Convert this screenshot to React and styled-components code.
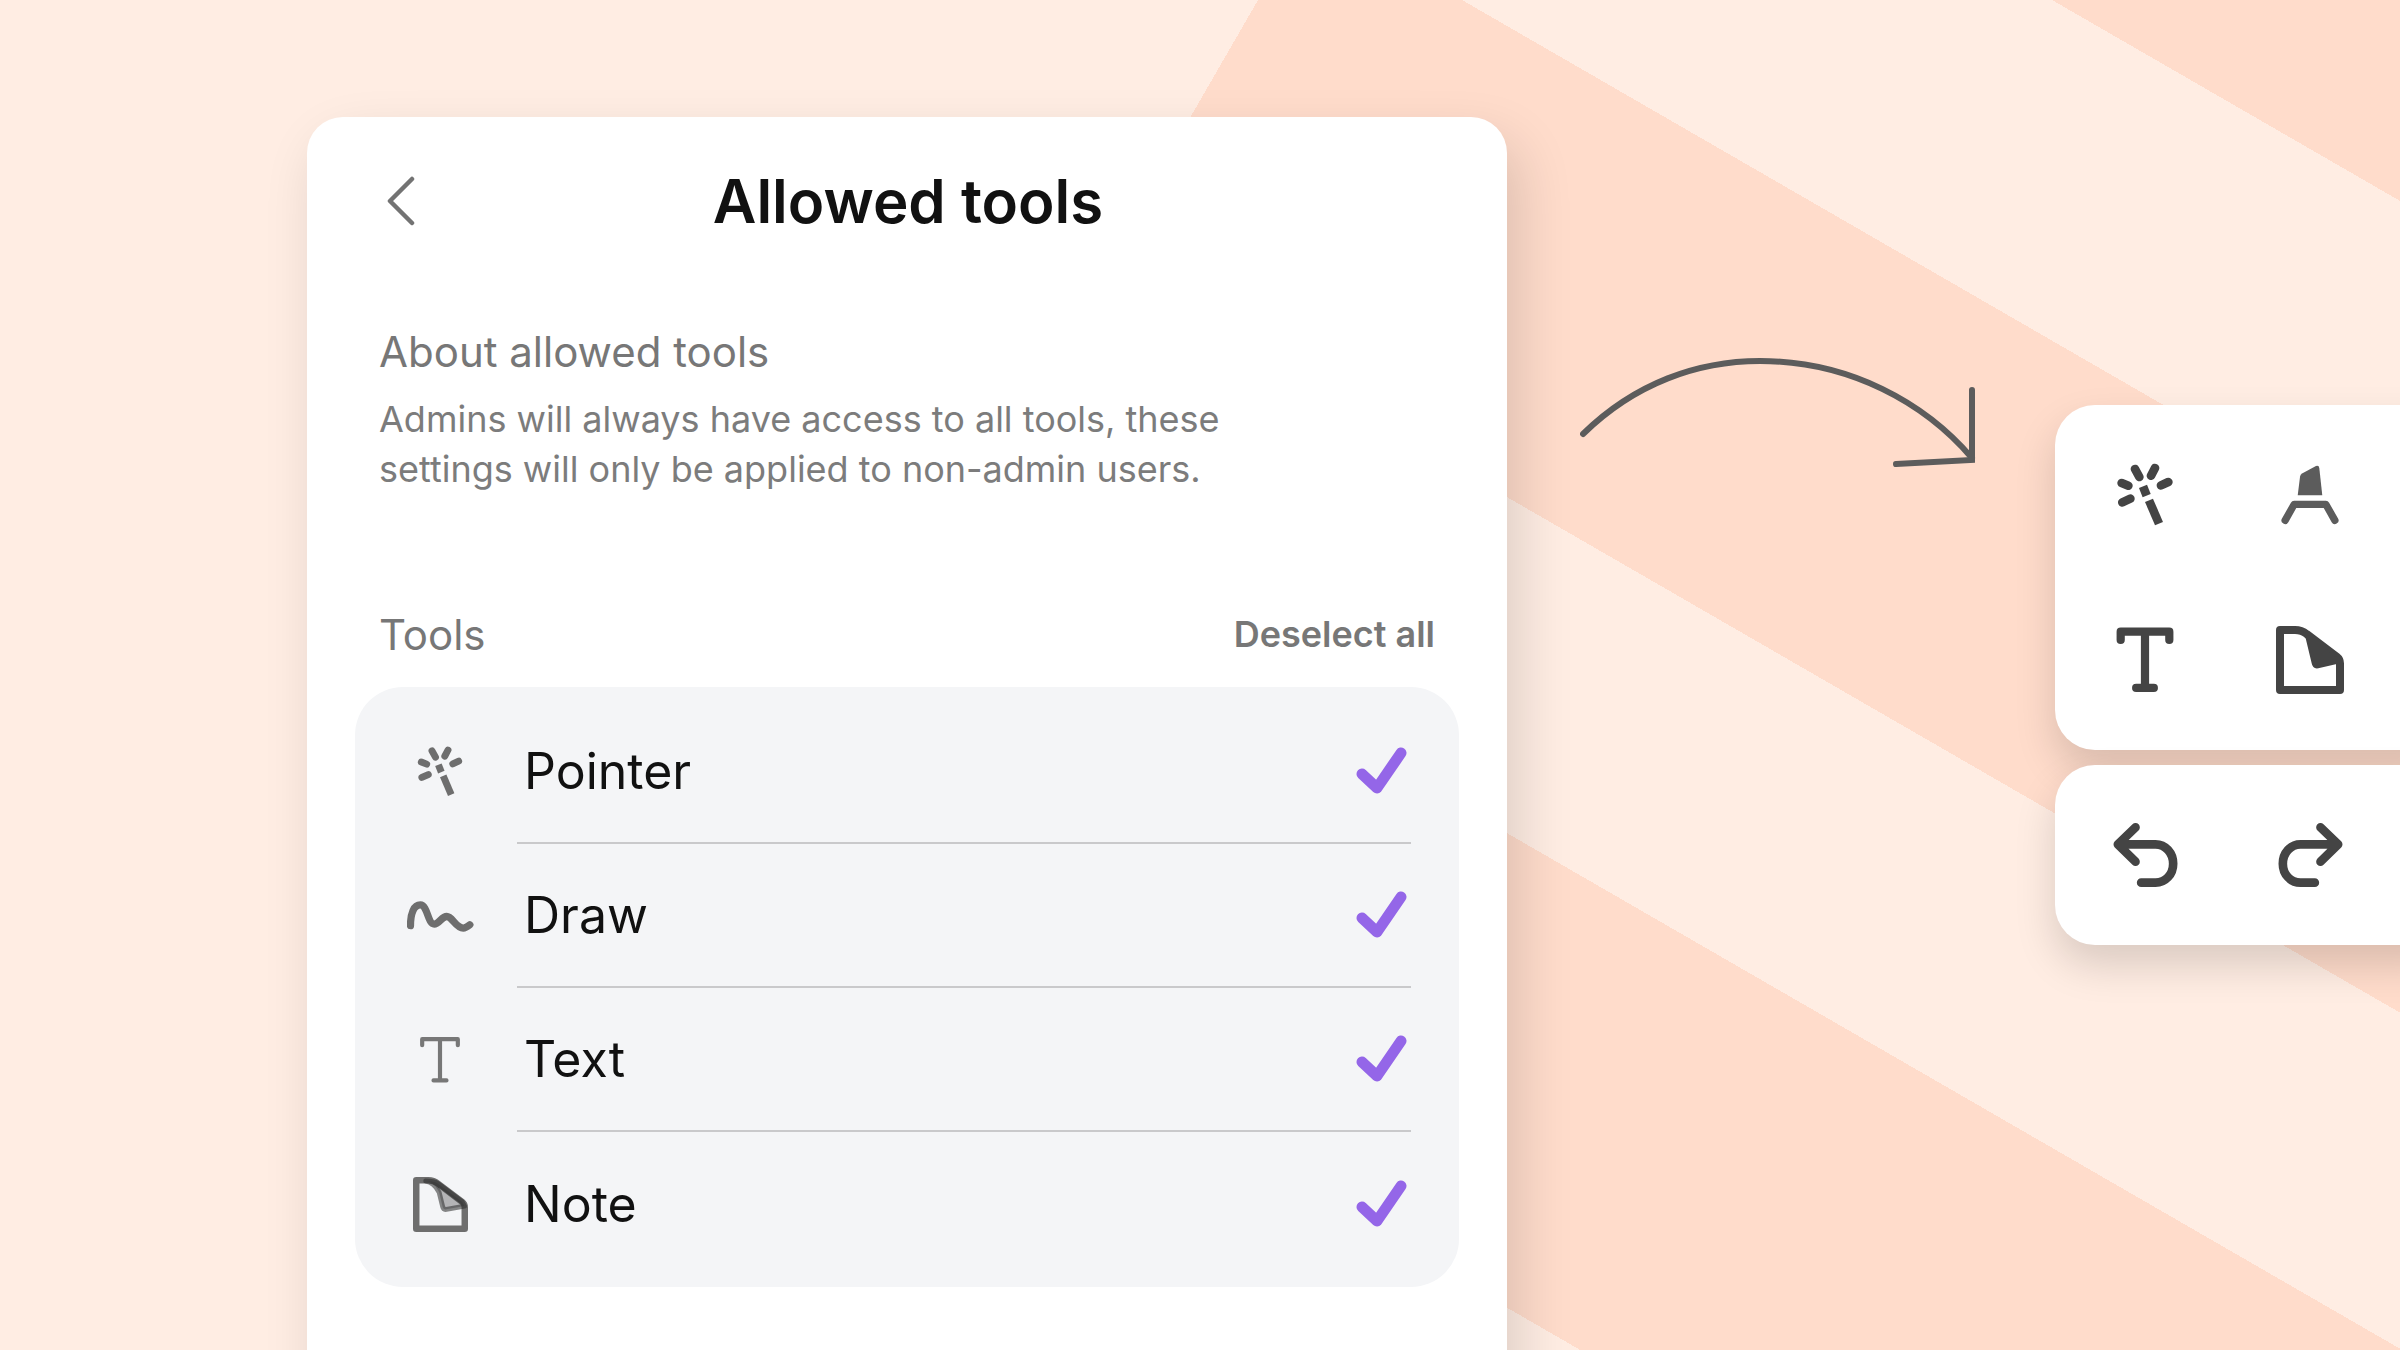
import React from 'react';
import styled, { createGlobalStyle } from 'styled-components';

const GlobalStyle = createGlobalStyle`
    html, body {
        margin: 0;
        padding: 0;
        height: 100%;
        overflow: hidden;
    }
    body {
        font-family: Inter, "Liberation Sans", sans-serif;
    }
`;

const Page = styled.div`
    width: 2400px;
    height: 1350px;
    overflow: hidden;
    display: flex;
    align-items: flex-start;
    padding: 117px 0 0 307px;
    box-sizing: border-box;
    background-color: #FFDCCB;
    background-image:
        linear-gradient(300deg, transparent 1664px, #FFEDE3 1664px),
        linear-gradient(210deg,
            #FFDCCB 174px, #FFEDE3 174px, #FFEDE3 469px,
            #FFDCCB 469px, #FFDCCB 877px, #FFEDE3 877px, #FFEDE3 1168px,
            #FFDCCB 1168px, #FFDCCB 1579px, #FFEDE3 1579px);
`;

const Card = styled.div`
    flex: none;
    width: 1200px;
    height: 1300px;
    background: #fff;
    border-radius: 36px;
    box-shadow: 12px 24px 55px rgba(0, 0, 0, 0.14);
    padding: 0 48px;
    box-sizing: border-box;
`;

const Header = styled.div`
    position: relative;
    height: 167px;
    display: flex;
    align-items: center;
    justify-content: center;
    padding-left: 2px;
    font-size: 60px;
    font-weight: 600;
    color: #111;
`;

const BackIcon = styled.svg`
    position: absolute;
    left: 31px;
    top: 59px;
    width: 30px;
    height: 50px;
`;

const About = styled.div`
    padding: 43px 24px 0;
`;

const AboutTitle = styled.div`
    font-size: 42px;
    line-height: 50px;
    color: #777;
`;

const AboutText = styled.div`
    font-size: 36px;
    line-height: 50px;
    color: #7c7c7c;
    margin-top: 17px;
`;

const ToolsHeader = styled.div`
    display: flex;
    justify-content: space-between;
    align-items: center;
    padding: 0 24px;
    margin-top: 115px;
    height: 50px;
`;

const ToolsLabel = styled.div`
    font-size: 42px;
    color: #777;
`;

const Deselect = styled.div`
    font-size: 36px;
    font-weight: 600;
    color: #777;
`;

const ToolList = styled.div`
    margin-top: 28px;
    background: #F4F5F7;
    border-radius: 48px;
    padding: 13px 48px 11px 0;
`;

const ToolRow = styled.div`
    display: flex;
    align-items: center;
    height: 144px;
`;

const ToolIcon = styled.div`
    flex: none;
    width: 162px;
    padding-left: 8px;
    display: flex;
    justify-content: center;
    box-sizing: border-box;
`;

const ToolName = styled.div`
    flex: 1;
    align-self: stretch;
    display: flex;
    align-items: center;
    justify-content: space-between;
    padding-left: 7px;
    font-size: 50px;
    color: #111;
    border-bottom: ${(p) => (p.$last ? 'none' : '2px solid #c9c9cb')};
`;

const Check = styled.svg`
    width: 56px;
    height: 56px;
`;

const Arrow = styled.svg`
    flex: none;
    width: 400px;
    height: 120px;
    margin: 241px 0 0 73px;
`;

const ToolbarColumn = styled.div`
    flex: none;
    margin: 288px 0 0 75px;
    display: flex;
    flex-direction: column;
    gap: 15px;
`;

const Toolbar = styled.div`
    width: 400px;
    padding: 7.5px;
    box-sizing: border-box;
    background: #fff;
    border-radius: 40px;
    box-shadow: 0 20px 40px rgba(0, 0, 0, 0.15);
    display: grid;
    grid-template-columns: 165px 165px;
    grid-auto-rows: 165px;
    justify-items: center;
    align-items: center;
`;

const Flippable = styled.svg`
    transform: ${(p) => (p.$flip ? 'scaleX(-1)' : 'none')};
`;

const WandIcon = ({ width = 60, color = '#444' }) => (
    <svg width={width} height={(width * 195) / 180} viewBox="230 190 180 195" fill="none" stroke={color} strokeWidth="26" strokeLinecap="round">
        <path d="M290 208L303 232M350 205L338 228M250 250L270 258M368 257L390 247M252 308L276 297" />
        <path d="M314 260L325 288" strokeLinecap="butt" strokeWidth="26" />
        <path d="M332 302L362 372" strokeLinecap="butt" strokeWidth="26" />
    </svg>
);

const TextIcon = ({ width = 60, color = '#444', weight = 26 }) => (
    <svg width={width} height={(width * 216) / 190} viewBox="220 672 190 216" fill="none" stroke={color} strokeWidth={weight} strokeLinecap="round" strokeLinejoin="round">
        <path d="M238 716V690H392V716M315 690V868M287 868H343" />
    </svg>
);

const NoteIcon = ({ width = 68, color = '#444', soft }) => (
    <svg width={width} height={width} viewBox="708 678 204 204" fill="none">
        <path
            d="M720 690H765Q785 690 800 702L890 770Q900 778 900 790V870H720Z"
            stroke={color}
            strokeWidth="24"
            strokeLinejoin="round"
        />
        {soft ? (
            <path
                d="M755 693C782 696 795 715 805 735L818 788Q821 800 832 798L899 786L890 770L800 702Q785 693 755 693Z"
                fill="rgba(60, 60, 60, 0.35)"
                stroke="rgba(40, 40, 40, 0.55)"
                strokeWidth="18"
                strokeLinejoin="round"
            />
        ) : (
            <path
                d="M775 690Q790 695 797 715L815 790Q818 808 835 805L900 790V780L800 702Q788 692 775 690Z"
                fill={color}
            />
        )}
    </svg>
);

const DrawIcon = () => (
    <svg width="67" height="31" viewBox="78 88 202 94" fill="none" stroke="#6e6e6e" strokeWidth="22" strokeLinecap="round" strokeLinejoin="round">
        <path d="M88 163C88 125 98 100 118 100C140 100 140 158 160 158C175 158 182 135 198 135C215 135 225 170 248 170C255 170 262 165 268 160" />
    </svg>
);

const MarkerIcon = () => (
    <svg width="60" height="63" viewBox="720 190 180 190" fill="#5c5c5c">
        <path d="M773 284L780 228Q781 222 786 219L828 196Q837 193 838 202L847 284Z" />
        <path d="M735 360L762 312H858L885 360" fill="none" stroke="#5c5c5c" strokeWidth="22" strokeLinecap="round" strokeLinejoin="round" />
    </svg>
);

const UndoIcon = ({ flip }) => (
    <Flippable $flip={flip} width="65" height="64" viewBox="218 248 194 192" fill="none" stroke="#444" strokeWidth="26" strokeLinecap="round" strokeLinejoin="round">
        <path d="M285 261L232 312L285 364M232 312H345C375 312 398 338 398 370C398 402 375 427 345 427H302" />
    </Flippable>
);

const CheckMark = () => (
    <Check viewBox="0 0 56 56" fill="none" stroke="#9466E8" strokeWidth="11" strokeLinecap="round" strokeLinejoin="round">
        <path d="M7 31L22 45L46 10" />
    </Check>
);

const tools = [
    { name: 'Pointer', icon: <WandIcon width={48} color="#6e6e6e" /> },
    { name: 'Draw', icon: <DrawIcon /> },
    { name: 'Text', icon: <TextIcon width={44} color="#777" weight={18} /> },
    { name: 'Note', icon: <NoteIcon width={55} color="#6e6e6e" soft /> },
];

function App() {
    return (
        <Page>
            <GlobalStyle />
            <Card>
                <Header>
                    <BackIcon viewBox="0 0 30 50" fill="none" stroke="#737373" strokeWidth="4.500" strokeLinecap="round" strokeLinejoin="round">
                        <path d="M26 3L4 25L26 47" />
                    </BackIcon>
                    Allowed tools
                </Header>
                <About>
                    <AboutTitle>About allowed tools</AboutTitle>
                    <AboutText>
                        Admins will always have access to all tools, these<br />
                        settings will only be applied to non-admin users.
                    </AboutText>
                </About>
                <ToolsHeader>
                    <ToolsLabel>Tools</ToolsLabel>
                    <Deselect>Deselect all</Deselect>
                </ToolsHeader>
                <ToolList>
                    {tools.map((tool, i) => (
                        <ToolRow key={tool.name}>
                            <ToolIcon>{tool.icon}</ToolIcon>
                            <ToolName $last={i === tools.length - 1}>
                                {tool.name}
                                <CheckMark />
                            </ToolName>
                        </ToolRow>
                    ))}
                </ToolList>
            </Card>
            <Arrow viewBox="0 0 400 120" fill="none" stroke="#5c5c5c" strokeWidth="6" strokeLinecap="round">
                <path d="M3 76C55 25 118 3 180 3C270 3 345 45 392 100" />
                <path d="M392 32V102L316 106" />
            </Arrow>
            <ToolbarColumn>
                <Toolbar>
                    <WandIcon />
                    <MarkerIcon />
                    <TextIcon />
                    <NoteIcon />
                </Toolbar>
                <Toolbar>
                    <UndoIcon />
                    <UndoIcon flip />
                </Toolbar>
            </ToolbarColumn>
        </Page>
    );
}

export default App;
